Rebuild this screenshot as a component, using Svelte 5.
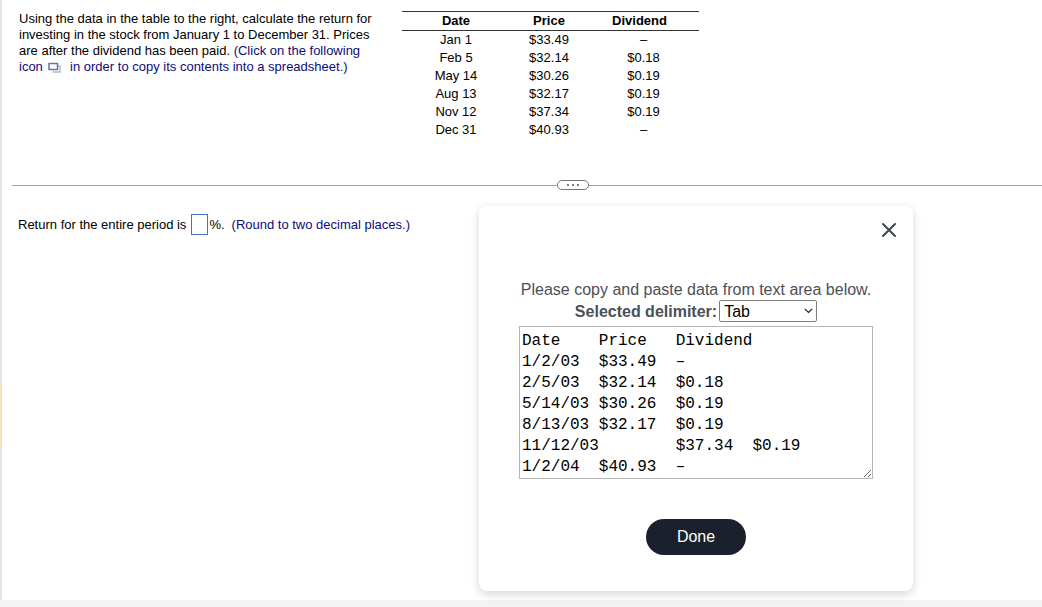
<script lang="ts">
    interface PriceRow {
        date: string
        price: string
        dividend: string
    }

    const rows: PriceRow[] = [
        { date: 'Jan 1', price: '$33.49', dividend: '–' },
        { date: 'Feb 5', price: '$32.14', dividend: '$0.18' },
        { date: 'May 14', price: '$30.26', dividend: '$0.19' },
        { date: 'Aug 13', price: '$32.17', dividend: '$0.19' },
        { date: 'Nov 12', price: '$37.34', dividend: '$0.19' },
        { date: 'Dec 31', price: '$40.93', dividend: '–' },
    ]

    const exportRows: string[][] = [
        ['Date', 'Price', 'Dividend'],
        ['1/2/03', '$33.49', '–'],
        ['2/5/03', '$32.14', '$0.18'],
        ['5/14/03', '$30.26', '$0.19'],
        ['8/13/03', '$32.17', '$0.19'],
        ['11/12/03', '$37.34', '$0.19'],
        ['1/2/04', '$40.93', '–'],
    ]

    let answer = $state('')
    let delimiter = $state('\t')
    let open = $state(true)

    let exportText = $derived(exportRows.map((row) => row.join(delimiter)).join('\n'))
</script>

<main class="page">
    <div class="marker"></div>

    <section class="problem">
        <p class="problem_text">
            Using the data in the table to the right, calculate the return for
            investing in the stock from January 1 to December 31. Prices are after
            the dividend has been paid.
            <span class="note">(Click on the following icon
                <button class="copy_button" aria-label="Copy table data" onclick={() => (open = true)}>
                    <svg width="13" height="11" viewBox="0 0 13 11">
                        <path d="M4.5 10h7.5v-6h-2" fill="none" stroke="#b3b8d6" stroke-width="1.4" />
                        <rect x="1" y="1.5" width="8.5" height="6" fill="#fff" stroke="#6a72a8" stroke-width="1.5" />
                    </svg>
                </button>
                in order to copy its contents into a spreadsheet.)</span>
        </p>

        <table class="prices">
            <thead>
                <tr>
                    <th class="col_date">Date</th>
                    <th class="col_price">Price</th>
                    <th class="col_dividend">Dividend</th>
                </tr>
            </thead>
            <tbody>
                {#each rows as row}
                    <tr>
                        <td>{row.date}</td>
                        <td>{row.price}</td>
                        <td>{row.dividend}</td>
                    </tr>
                {/each}
            </tbody>
        </table>
    </section>

    <div class="divider">
        <button class="handle" aria-label="Resize panels">
            <span class="dot"></span>
            <span class="dot"></span>
            <span class="dot"></span>
        </button>
    </div>

    <section class="work">
        <div class="question">
            <label for="answer">Return for the entire period is</label>
            <input id="answer" class="answer" type="text" bind:value={answer} />
            <span>%.</span>
            <span class="note hint">(Round to two decimal places.)</span>
        </div>

        {#if open}
            <div class="dialog" role="dialog" aria-label="Copy data">
                <button class="close" aria-label="Close" onclick={() => (open = false)}>
                    <svg width="16" height="16" viewBox="0 0 16 16">
                        <path d="M2 2l12 12M14 2L2 14" fill="none" stroke="#3f4652" stroke-width="2" stroke-linecap="round" />
                    </svg>
                </button>

                <label class="message" for="data">Please copy and paste data from text area below.</label>

                <div class="delimiter">
                    <label for="delimiter">Selected delimiter:</label>
                    <div class="select_wrap">
                        <select id="delimiter" bind:value={delimiter}>
                            <option value={'\t'}>Tab</option>
                            <option value=",">Comma</option>
                        </select>
                        <svg class="chevron" width="9" height="6" viewBox="0 0 9 6">
                            <path d="M0.8 0.8l3.7 3.7l3.7-3.7" fill="none" stroke="#222" stroke-width="1.2" />
                        </svg>
                    </div>
                </div>

                <textarea id="data" class="data" spellcheck="false" value={exportText}></textarea>

                <button class="done" onclick={() => (open = false)}>Done</button>
            </div>
        {/if}
    </section>
</main>

<style>
    :global(body) {
        background: #f3f3f3;
    }

    .page {
        position: relative;
        box-sizing: border-box;
        min-height: calc(100vh - 7px);
        margin-bottom: 7px;
        border-left: 2px solid #e2e2e2;
        background: #fff;
        color: #000;
        font-family: "Liberation Sans", Arial, sans-serif;
        font-size: 13px;
        line-height: 16px;
    }

    .marker {
        position: absolute;
        top: 384px;
        left: -2px;
        width: 1px;
        height: 64px;
        background: #f3e3b8;
    }

    .note {
        color: #0c0c78;
    }

    .problem {
        display: flex;
        align-items: flex-start;
        gap: 27px;
        box-sizing: border-box;
        min-height: 180px;
        padding: 11px 17px 0;
    }

    .problem_text {
        width: 356px;
        margin: 0;
    }

    .copy_button {
        height: 11px;
        margin: 0 5px 0 2px;
        padding: 0;
        border: 0;
        background: none;
        vertical-align: -2px;
        line-height: 0;
        cursor: pointer;
    }

    .prices {
        width: 297px;
        border-collapse: collapse;
        table-layout: fixed;
        line-height: 18px;
        text-align: center;
    }

    .prices th,
    .prices td {
        padding: 0;
    }

    .prices th {
        border-top: 1px solid #333;
        border-bottom: 1px solid #333;
    }

    .prices .col_date {
        width: 108px;
    }

    .prices .col_price {
        width: 78px;
    }

    .prices .col_dividend {
        padding-right: 8px;
    }

    .divider {
        display: flex;
        align-items: center;
        height: 10px;
        margin-left: 10px;
    }

    .divider::before,
    .divider::after {
        content: "";
        height: 1px;
        background: #a0a2b4;
    }

    .divider::before {
        flex: 545;
    }

    .divider::after {
        flex: 453;
    }

    .handle {
        display: flex;
        align-items: center;
        justify-content: center;
        gap: 3px;
        box-sizing: border-box;
        width: 32px;
        height: 10px;
        padding: 0;
        border: 1px solid #75777f;
        border-radius: 5px;
        background: #fff;
        cursor: row-resize;
    }

    .dot {
        width: 2px;
        height: 2px;
        border-radius: 1px;
        background: #555;
    }

    .work {
        display: flex;
        align-items: flex-start;
        justify-content: space-between;
        padding: 16px 129px 9px 16px;
    }

    .question {
        display: flex;
        align-items: center;
        padding-top: 8px;
    }

    .answer {
        box-sizing: border-box;
        width: 17px;
        height: 21px;
        margin: 0 1px 0 5px;
        padding: 0 2px;
        border: 1px solid #4a72c4;
        outline: none;
        font: inherit;
    }

    .hint {
        margin-left: 7px;
    }

    .dialog {
        display: flex;
        flex-direction: column;
        align-items: center;
        box-sizing: border-box;
        width: 434px;
        padding: 12px 12px 36px;
        border-radius: 8px;
        background: #fff;
        box-shadow: 0 3px 10px rgba(0, 0, 0, 0.17);
        color: #4c5058;
        font-size: 16px;
        line-height: 21px;
    }

    .close {
        display: flex;
        align-items: center;
        justify-content: center;
        align-self: flex-end;
        width: 24px;
        height: 24px;
        padding: 0;
        border: 0;
        background: none;
        cursor: pointer;
    }

    .message {
        margin-top: 37px;
    }

    .delimiter {
        display: flex;
        align-items: center;
        gap: 2px;
        font-weight: bold;
    }

    .select_wrap {
        position: relative;
        display: flex;
    }

    .delimiter select {
        box-sizing: border-box;
        width: 98px;
        height: 22px;
        padding: 0 4px;
        border: 1px solid #808080;
        border-radius: 2px;
        background: #fff;
        color: #000;
        font-family: inherit;
        font-size: 16px;
        appearance: none;
    }

    .chevron {
        position: absolute;
        top: 8px;
        right: 4px;
        pointer-events: none;
    }

    .data {
        box-sizing: border-box;
        width: 354px;
        height: 153px;
        margin: 4px 0 0;
        padding: 4px 2px 0;
        border: 1px solid #b5b5b5;
        background: #fff;
        color: #000;
        font-family: "Liberation Mono", "Courier New", monospace;
        font-size: 16px;
        line-height: 21px;
        overflow: hidden;
        tab-size: 8;
    }

    .done {
        width: 100px;
        height: 36px;
        margin-top: 40px;
        padding: 0;
        border: 0;
        border-radius: 18px;
        background: #1b212c;
        color: #fff;
        font-family: inherit;
        font-size: 16px;
        cursor: pointer;
    }
</style>
